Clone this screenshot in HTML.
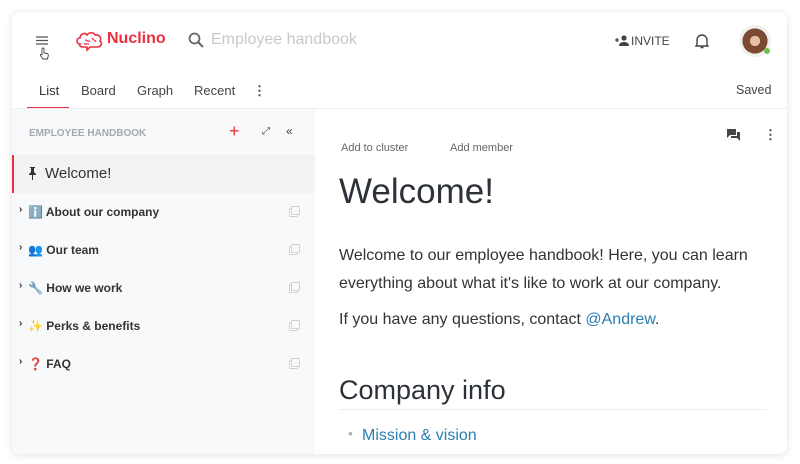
<!DOCTYPE html>
<html><head><meta charset="utf-8"><style>
*{box-sizing:border-box;margin:0;padding:0}
body{width:800px;height:464px;background:#fff;font-family:"Liberation Sans",sans-serif;position:relative;overflow:hidden;color:#333}
.card{position:absolute;left:12px;top:12px;width:775px;height:442px;background:#fff;border-radius:8px;box-shadow:0 1px 8px rgba(0,0,0,.12);overflow:hidden}
.abs{position:absolute}
.side{position:absolute;left:0;top:97px;width:303px;height:345px;background:#f8f9fb}
.tab{position:absolute;top:71px;font-size:13px;color:#444}
.item{position:absolute;left:0;width:303px;height:38px;font-size:12px;color:#333;font-weight:bold}
.item .ch{position:absolute;left:7px;top:11px;font-size:10px;color:#333}
.item .t{position:absolute;left:16px;top:12px}
.item .cp{position:absolute;left:279px;top:13px;width:9px;height:9px;border:1px solid #d0d0d0;border-radius:1px;box-shadow:-2px 2px 0 -1px #fff,-2px 2px 0 0 #d0d0d0}
p{font-size:16px;color:#333}
</style></head><body>
<div class="card">
  <!-- hamburger -->
  <svg class="abs" style="left:24px;top:24px" width="12" height="10" viewBox="0 0 12 10"><path d="M0 1h12M0 4.5h12M0 8h12" stroke="#555" stroke-width="1.3"/></svg>
  <svg class="abs" style="left:27px;top:35px" width="10" height="13" viewBox="0 0 10 13"><path d="M3 7V2a1 1 0 012 0v4l3 .5c1 .3 1.5 1 1.3 2L8.5 12H4L1.5 8.5c-.5-.8.5-1.6 1.5-.8z" fill="#fff" stroke="#444" stroke-width=".9"/></svg>
  <!-- logo -->
  <svg class="abs" style="left:63px;top:17px" width="30" height="24" viewBox="0 0 30 24"><path d="M5 15c-4 0-4-6 0-6 0-4 5-6 7-3 2-3 7-3 8 0 4-1 7 3 5 6 3 2 1 6-3 6h-7l-3 3v-3H8c-3 0-4-2-3-3z" fill="none" stroke="#e8303f" stroke-width="1.6"/><path d="M10 11c2 0 3 2 5 1M17 9c1 2 3 2 4 4M9 15h5" fill="none" stroke="#e8303f" stroke-width="1.3"/></svg>
  <div class="abs" style="left:95px;top:18px;font-size:16px;font-weight:bold;color:#e8303f">Nuclino</div>
  <!-- search -->
  <svg class="abs" style="left:176px;top:20px" width="16" height="16" viewBox="0 0 16 16"><circle cx="6.5" cy="6.5" r="5" fill="none" stroke="#666" stroke-width="1.8"/><path d="M10 10l5 5" stroke="#666" stroke-width="2"/></svg>
  <div class="abs" style="left:199px;top:19px;font-size:16px;color:#c6c9cd">Employee handbook</div>
  <!-- invite -->
  <svg class="abs" style="left:603px;top:23px" width="14" height="11" viewBox="0 0 14 11"><path d="M0 5h4M2 3v4" stroke="#444" stroke-width="1.3"/><circle cx="9" cy="3" r="2.6" fill="#444"/><path d="M4 11c0-3 2.5-4 5-4s5 1 5 4z" fill="#444"/></svg>
  <div class="abs" style="left:619px;top:22px;font-size:12px;color:#444">INVITE</div>
  <svg class="abs" style="left:683px;top:21px" width="14" height="16" viewBox="0 0 14 16"><path d="M2 12V7a5 5 0 0110 0v5l1 1H1z" fill="none" stroke="#444" stroke-width="1.4"/><path d="M5.5 14.5h3" stroke="#444" stroke-width="1.4"/></svg>
  <div class="abs" style="left:727px;top:13px;width:32px;height:32px;border-radius:50%;background:radial-gradient(circle at 50% 50%,#eac0a4 0 22%,#7a4a33 23% 55%,#f2f0ee 56%)"></div>
  <div class="abs" style="left:752px;top:36px;width:6px;height:6px;border-radius:50%;background:#6cc24a"></div>
  <!-- tabs -->
  <div class="tab" style="left:27px;color:#333">List</div>
  <div class="abs" style="left:15px;top:95px;width:42px;height:2px;background:#e8303f"></div>
  <div class="tab" style="left:69px">Board</div>
  <div class="tab" style="left:125px">Graph</div>
  <div class="tab" style="left:182px">Recent</div>
  <div class="tab" style="left:241px;font-weight:bold">⋮</div>
  <div class="tab" style="left:724px;font-size:12.5px">Saved</div>
  <div class="abs" style="left:0;top:96px;width:775px;height:1px;background:#eceef0"></div>
  <!-- sidebar -->
  <div class="side">
    <div class="abs" style="left:17px;top:19px;font-size:10px;font-weight:bold;color:#a5a8ad">EMPLOYEE HANDBOOK</div>
    <div class="abs" style="left:217px;top:12px;font-size:18px;color:#e8303f">+</div>
    <div class="abs" style="left:250px;top:17px;font-size:10px;color:#444">⤢</div>
    <div class="abs" style="left:274px;top:15px;font-size:12px;color:#444">«</div>
    <div class="abs" style="left:0;top:46px;width:303px;height:38px;background:#f1f3f5;border-left:2px solid #e8303f"></div>
    <svg class="abs" style="left:16px;top:58px" width="9" height="13" viewBox="0 0 9 13"><path d="M2 0h5v1H6v4l2 2v1H5v5H4V8H1V7l2-2V1H2z" fill="#333"/></svg>
    <div class="abs" style="left:33px;top:56px;font-size:15px;color:#333">Welcome!</div>
    <div class="item" style="top:84px"><span class="ch">›</span><span class="t">ℹ️ About our company</span><span class="cp"></span></div>
    <div class="item" style="top:122px"><span class="ch">›</span><span class="t">👥 Our team</span><span class="cp"></span></div>
    <div class="item" style="top:160px"><span class="ch">›</span><span class="t">🔧 How we work</span><span class="cp"></span></div>
    <div class="item" style="top:198px"><span class="ch">›</span><span class="t">✨ Perks &amp; benefits</span><span class="cp"></span></div>
    <div class="item" style="top:236px"><span class="ch">›</span><span class="t"><span style="color:#c00">❓</span> FAQ</span><span class="cp"></span></div>
  </div>
  <!-- content -->
  <svg class="abs" style="left:715px;top:117px" width="13" height="12" viewBox="0 0 13 12"><path d="M0 0h9v6H3L0 9zM10 3h3v9l-3-3H4V7h6z" fill="#444"/></svg>
  <div class="abs" style="left:752px;top:115px;font-size:13px;font-weight:bold;color:#444">⋮</div>
  <div class="abs" style="left:329px;top:130px;font-size:11px;color:#666">Add to cluster</div>
  <div class="abs" style="left:438px;top:130px;font-size:11px;color:#666">Add member</div>
  <div class="abs" style="left:327px;top:160px;font-size:35px;color:#2d3238">Welcome!</div>
  <p class="abs" style="left:327px;top:230px;line-height:28px;width:440px">Welcome to our employee handbook! Here, you can learn everything about what it's like to work at our company.</p>
  <p class="abs" style="left:327px;top:299px">If you have any questions, contact <span style="color:#2a7db0">@Andrew</span>.</p>
  <div class="abs" style="left:327px;top:363px;font-size:27px;color:#2d3238">Company info</div>
  <div class="abs" style="left:327px;top:397px;width:428px;height:1px;background:#eceef0"></div>
  <div class="abs" style="left:336px;top:417px;font-size:8px;color:#aaa">●</div>
  <div class="abs" style="left:350px;top:415px;font-size:16px;color:#2a7db0">Mission &amp; vision</div>
</div>
</body></html>
